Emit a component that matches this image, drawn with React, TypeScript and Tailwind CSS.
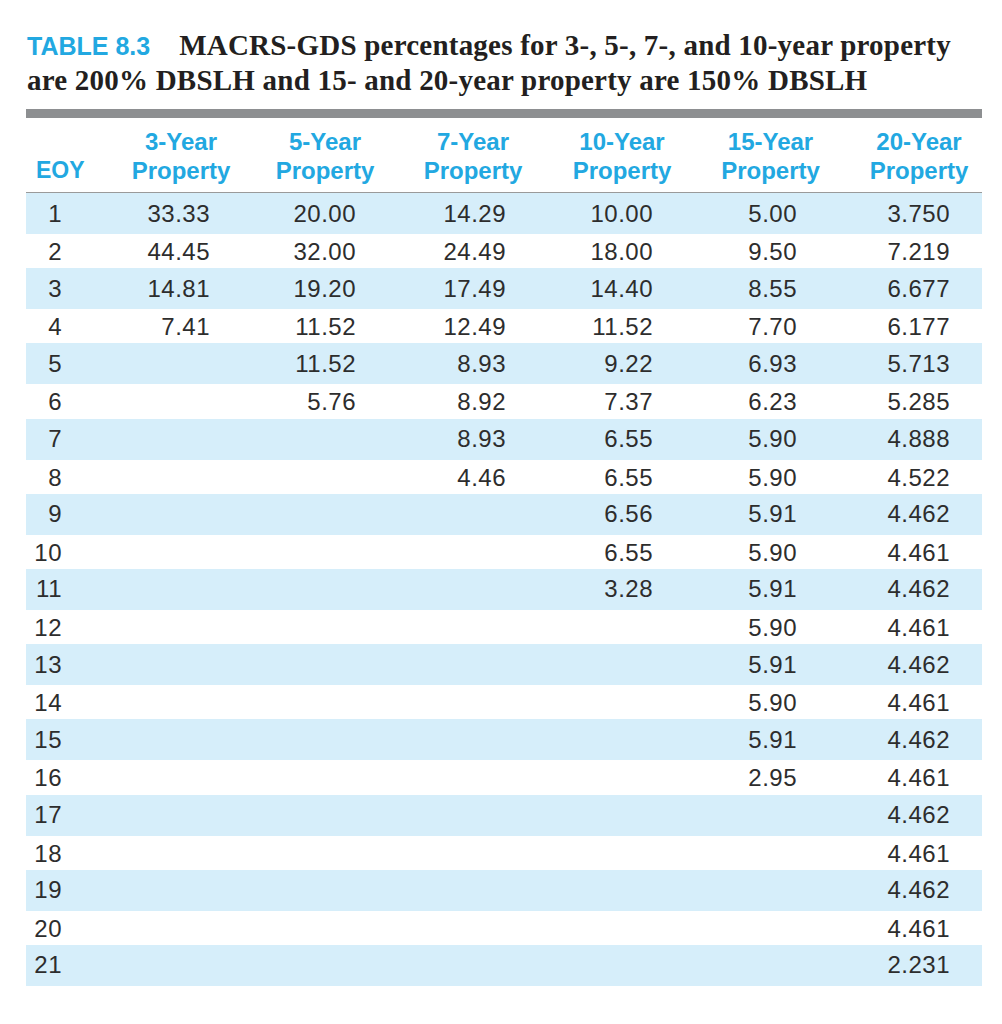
const cols = ["EOY", "3-Year", "5-Year", "7-Year", "10-Year", "15-Year", "20-Year"];

// values per year: [3, 5, 7, 10, 15, 20]
const data: string[][] = [
  ["33.33", "20.00", "14.29", "10.00", "5.00", "3.750"],
  ["44.45", "32.00", "24.49", "18.00", "9.50", "7.219"],
  ["14.81", "19.20", "17.49", "14.40", "8.55", "6.677"],
  ["7.41", "11.52", "12.49", "11.52", "7.70", "6.177"],
  ["", "11.52", "8.93", "9.22", "6.93", "5.713"],
  ["", "5.76", "8.92", "7.37", "6.23", "5.285"],
  ["", "", "8.93", "6.55", "5.90", "4.888"],
  ["", "", "4.46", "6.55", "5.90", "4.522"],
  ["", "", "", "6.56", "5.91", "4.462"],
  ["", "", "", "6.55", "5.90", "4.461"],
  ["", "", "", "3.28", "5.91", "4.462"],
  ["", "", "", "", "5.90", "4.461"],
  ["", "", "", "", "5.91", "4.462"],
  ["", "", "", "", "5.90", "4.461"],
  ["", "", "", "", "5.91", "4.462"],
  ["", "", "", "", "2.95", "4.461"],
  ["", "", "", "", "", "4.462"],
  ["", "", "", "", "", "4.461"],
  ["", "", "", "", "", "4.462"],
  ["", "", "", "", "", "4.461"],
  ["", "", "", "", "", "2.231"],
];

const gridCols = "grid grid-cols-[84px_142px_146px_150px_148px_149px_136px]";
const cellPad = ["pr-[48px]", "pr-[42px]", "pr-[42px]", "pr-[42px]", "pr-[43px]", "pr-[48px]", "pr-[31px]"];

export default function App() {
  return (
    <div className="w-[1002px] min-h-[1024px] bg-white pt-[28px]">
      <div className="mx-[26px] w-[956px]">
        {/* Caption */}
        <h1 className="font-['Liberation_Serif','Times_New_Roman',serif] text-[29px] leading-[34px] font-bold text-[#231f20] pl-[1px] tracking-[0.22px]">
          <span className="font-['Liberation_Sans',Arial,sans-serif] text-[25px] tracking-normal text-[#22a8e1] mr-[29px]">TABLE 8.3</span>
          MACRS-GDS percentages for 3-, 5-, 7-, and 10-year property
          <br />
          are 200% DBSLH and 15- and 20-year property are 150% DBSLH
        </h1>

        <div className="mt-[12px] h-[9px] bg-[#8d8f91]" />

        {/* Header */}
        <div className={`${gridCols} pt-[9px] pb-[7px] border-b-[1.5px] border-[#9a9a9a] font-['Liberation_Sans',Arial,sans-serif] text-[24px] leading-[29px] font-bold text-[#22a8e1]`}>
          <div className="pl-[10px] flex items-end text-[23px]">EOY</div>
          {cols.slice(1).map((c, i) => (
            <div key={c} className={i === 5 ? "text-center pl-[12px]" : "text-center"}>
              <div>{c}</div>
              <div>Property</div>
            </div>
          ))}
        </div>

        {/* Body */}
        <div className="font-['Liberation_Sans',Arial,sans-serif] text-[24px] tracking-[0.5px] text-[#2d2d2d]">
          {data.map((row, r) => (
            <div
              key={r}
              className={`${gridCols} items-center ${r % 2 === 0 ? "h-[41.1px] bg-[#d6eefa]" : "h-[34.1px] bg-white"}`}
            >
              {[String(r + 1), ...row].map((v, i) => (
                <div key={i} className={`text-right ${cellPad[i]}`}>
                  {v}
                </div>
              ))}
            </div>
          ))}
        </div>
      </div>
    </div>
  );
}
